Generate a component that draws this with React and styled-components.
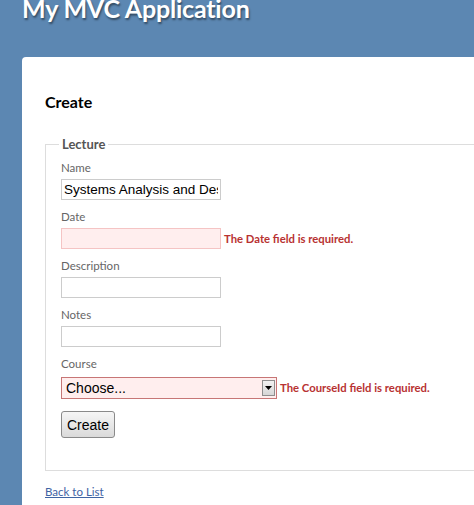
import React from "react";
import styled, { createGlobalStyle } from "styled-components";

const GlobalStyle = createGlobalStyle`
  html, body {
    margin: 0;
    padding: 0;
    overflow: hidden;
    background-color: #5c87b2;
    font-family: Lato, "DejaVu Sans", sans-serif;
  }
`;

const Page = styled.div`
  display: flex;
  flex-direction: column;
`;

const Header = styled.header`
  height: 57px;
`;

const Title = styled.h1`
  margin: 0 0 0 22px;
  font-size: 25px;
  line-height: 17px;
  letter-spacing: -0.2px;
  font-weight: bold;
  color: #ffffff;
  text-shadow: 1px 2px 2px rgba(0, 0, 0, 0.45);
  white-space: nowrap;
`;

const Main = styled.main`
  margin-left: 22px;
  width: 940px;
  min-height: 460px;
  background-color: #ffffff;
  border-top-left-radius: 4px;
  padding: 35px 0 0 23px;
  box-sizing: border-box;
`;

const Heading = styled.h2`
  margin: 0;
  font-size: 16px;
  line-height: 20px;
  font-weight: bold;
  color: #000000;
`;

const Fieldset = styled.fieldset`
  margin: 24px 0 0 0;
  padding: 8px 0 32px 15px;
  border: 1px solid #dddddd;
  min-inline-size: auto;
`;

const Legend = styled.legend`
  margin-left: -2px;
  padding: 0 3px;
  font-size: 13px;
  line-height: 16px;
  font-weight: bold;
  color: #555555;
`;

const Field = styled.div`
  display: flex;
  flex-direction: column;
  margin-bottom: 9px;
`;

const Label = styled.label`
  font-size: 11.5px;
  line-height: 16px;
  color: #666666;
`;

const Row = styled.div`
  display: flex;
  align-items: center;
  gap: 3px;
  margin-top: ${(props) => props.$top || "3px"};
`;

const Input = styled.input`
  width: 160px;
  height: 21px;
  box-sizing: border-box;
  margin: 0;
  padding: 0 2px;
  font-family: "Liberation Sans", Arial, sans-serif;
  font-size: 13.5px;
  color: #000000;
  border: 1px solid ${(props) => (props.$invalid ? "#f5c4c4" : "#cccccc")};
  background-color: ${(props) => (props.$invalid ? "#ffeeee" : "#ffffff")};
  outline: none;
`;

const Error = styled.span`
  font-size: 11.3px;
  line-height: 16px;
  font-weight: bold;
  color: #b83232;
  white-space: nowrap;
`;

const SelectBox = styled.div`
  display: flex;
  align-items: center;
  width: 216px;
  height: 22px;
  box-sizing: border-box;
  border: 1px solid #c77676;
  background-color: #ffeeee;
  font-family: "Liberation Sans", Arial, sans-serif;
  font-size: 14px;
  color: #000000;
`;

const SelectText = styled.span`
  flex: 1;
  padding-left: 4px;
`;

const Arrow = styled.span`
  display: flex;
  align-items: center;
  justify-content: center;
  width: 13px;
  height: 16px;
  margin-right: 1px;
  box-sizing: border-box;
  border: 1px solid #8e8e8e;
  background: linear-gradient(#f2f2f2, #d6d6d6);
`;

const Button = styled.button`
  margin-top: 3px;
  width: 54px;
  height: 27px;
  padding: 0;
  font-family: "Liberation Sans", Arial, sans-serif;
  font-size: 14px;
  color: #000000;
  border: 1px solid #8a8a8a;
  border-radius: 3px;
  background: linear-gradient(#f6f6f6, #dadada);
`;

const BackLink = styled.a`
  display: inline-block;
  margin-top: 13px;
  font-size: 11.5px;
  line-height: 16px;
  color: #3f64a3;
  text-decoration: underline;
`;

const fields = [
  { id: 0, label: "Name", value: "Systems Analysis and Design" },
  { id: 1, label: "Date", value: "", error: "The Date field is required." },
  { id: 2, label: "Description", value: "" },
  { id: 3, label: "Notes", value: "" },
];

const App = () => {
  return (
    <Page>
      <GlobalStyle />
      <Header>
        <Title>My MVC Application</Title>
      </Header>
      <Main>
        <Heading>Create</Heading>
        <Fieldset>
          <Legend>Lecture</Legend>
          {fields.map((f) => (
            <Field key={f.id}>
              <Label>{f.label}</Label>
              <Row>
                <Input defaultValue={f.value} $invalid={!!f.error} />
                {f.error && <Error>{f.error}</Error>}
              </Row>
            </Field>
          ))}
          <Field>
            <Label>Course</Label>
            <Row $top="5px">
              <SelectBox>
                <SelectText>Choose...</SelectText>
                <Arrow>
                  <svg width="7" height="4" viewBox="0 0 7 4">
                    <polygon points="0,0 7,0 3.5,4" fill="#000" />
                  </svg>
                </Arrow>
              </SelectBox>
              <Error>The CourseId field is required.</Error>
            </Row>
          </Field>
          <Button type="submit">Create</Button>
        </Fieldset>
        <BackLink href="#">Back to List</BackLink>
      </Main>
    </Page>
  );
};

export default App;
